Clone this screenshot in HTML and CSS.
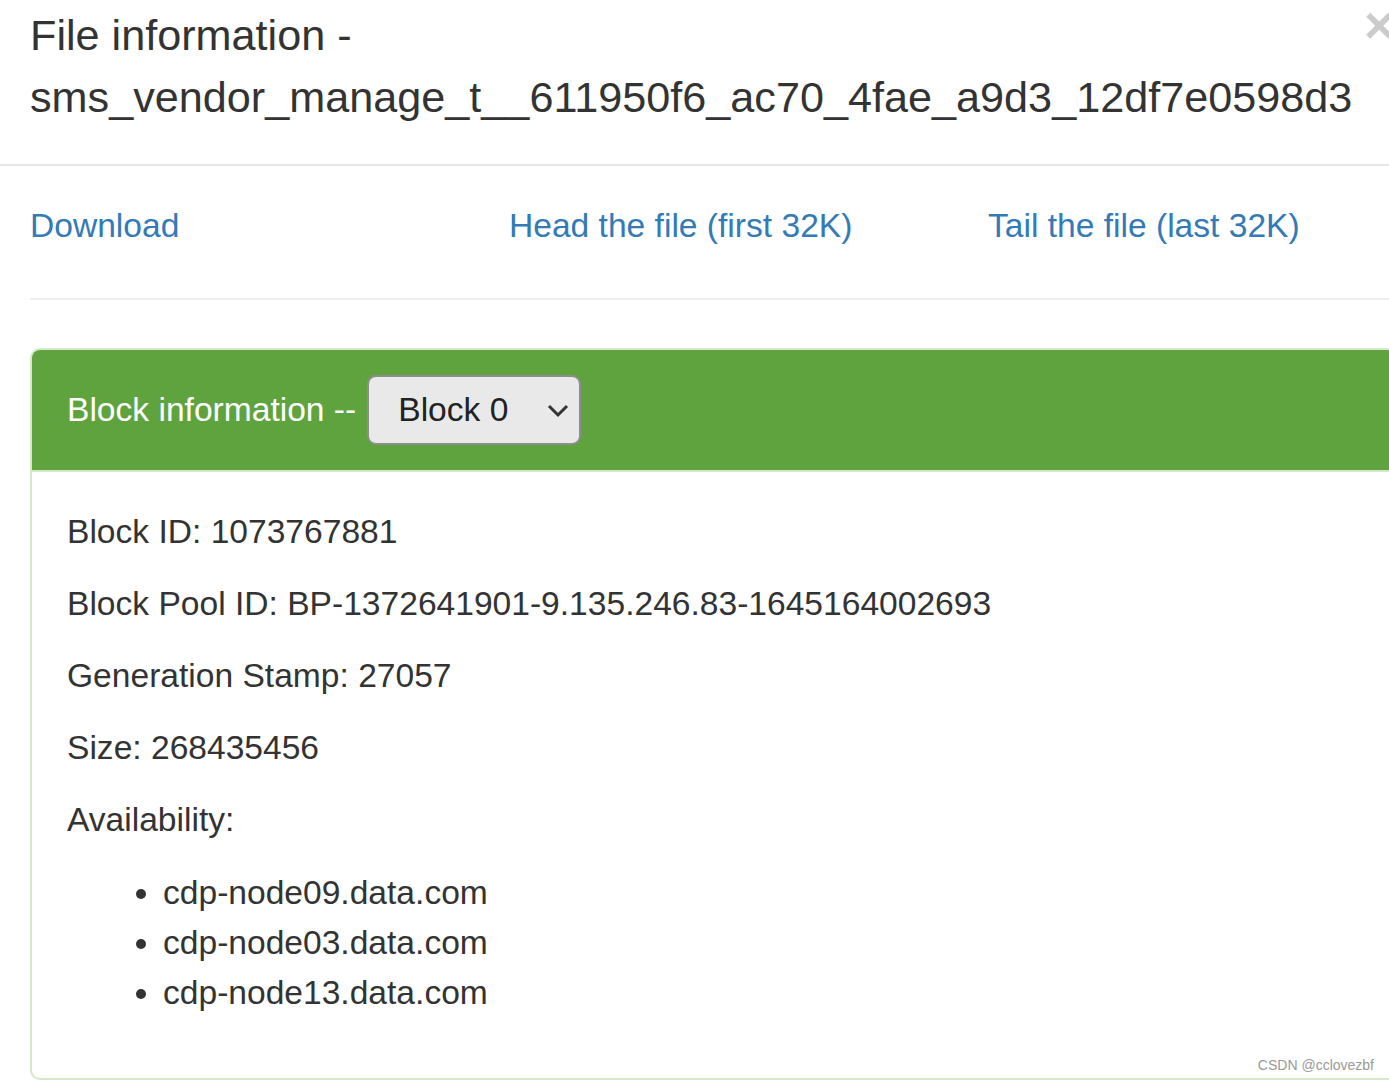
FILE: index.html
```html
<!DOCTYPE html>
<html>
<head>
<meta charset="utf-8">
<link rel="stylesheet" href="styles.css">
</head>
<body>
<div class="modal">
  <div class="modal-header">
    <span class="close">&times;</span>
    <h4 class="modal-title">File information - sms_vendor_manage_t__611950f6_ac70_4fae_a9d3_12df7e0598d3</h4>
  </div>
  <div class="modal-body">
    <div class="row">
      <div class="col"><a href="#">Download</a></div>
      <div class="col"><a href="#">Head the file (first 32K)</a></div>
      <div class="col"><a href="#">Tail the file (last 32K)</a></div>
    </div>
    <hr>
    <div class="panel">
      <div class="panel-heading">
        <span>Block information --</span>
        <span class="select">
          <span class="select-text">Block 0</span>
          <svg class="chev" width="22" height="14" viewBox="0 0 22 14"><path d="M2 2 L11 11 L20 2" fill="none" stroke="#333" stroke-width="3"/></svg>
        </span>
      </div>
      <div class="panel-body">
        <p>Block ID: 1073767881</p>
        <p>Block Pool ID: BP-1372641901-9.135.246.83-1645164002693</p>
        <p>Generation Stamp: 27057</p>
        <p>Size: 268435456</p>
        <p>Availability:</p>
        <ul>
          <li>cdp-node09.data.com</li>
          <li>cdp-node03.data.com</li>
          <li>cdp-node13.data.com</li>
        </ul>
      </div>
    </div>
  </div>
</div>
<div class="watermark">CSDN @cclovezbf</div>
</body>
</html>
```

FILE: styles.css
```css
html, body {
  margin: 0;
  padding: 0;
  overflow: hidden;
  background: #fff;
}
body {
  width: 1389px;
  height: 1080px;
  position: relative;
  font-family: "Liberation Sans", Arial, Helvetica, sans-serif;
  color: #333;
  font-size: 33.6px;
  line-height: 48px;
}
.modal {
  width: 1440px;
  margin-left: -7px;
}
.modal-header {
  position: relative;
  padding: 5px 36px 36px 37px;
  border-bottom: 2.4px solid #e5e5e5;
}
.modal-title {
  margin: 0;
  font-size: 43.2px;
  font-weight: normal;
  line-height: 61.7px;
  padding-right: 60px;
}
.close {
  position: absolute;
  left: 1371px;
  top: 0px;
  font-size: 52px;
  font-weight: bold;
  line-height: 50px;
  color: #000;
  opacity: 0.2;
  text-shadow: 0 2px 0 #fff;
}
.modal-body {
  padding: 36px 36px 36px 37px;
}
.row {
  display: flex;
  margin: 0 -36px;
}
.col {
  width: 479px;
  padding: 0 36px;
  box-sizing: border-box;
}
a {
  color: #337ab7;
  text-decoration: none;
}
hr {
  margin: 48px 0;
  border: 0;
  border-top: 2.4px solid #eee;
  height: 0;
}
.panel {
  border: 2.4px solid #d6e9c6;
  border-radius: 10px;
}
.panel-heading {
  background: #5fa33e;
  color: #fff;
  padding: 25px 36px 25px 35px;
  border-bottom: 2.4px solid #d6e9c6;
  border-radius: 8px 8px 0 0;
  display: flex;
  align-items: center;
  height: 70px;
}
.select {
  position: relative;
  display: inline-flex;
  align-items: center;
  margin-left: 11px;
  width: 214px;
  height: 70px;
  box-sizing: border-box;
  border: 2.5px solid #8d8d8d;
  border-radius: 9px;
  background: #e9e9e9;
  color: #222;
  padding-left: 29px;
}
.select-text {
  line-height: 48px;
}
.chev {
  position: absolute;
  left: 178px;
  top: 27px;
}
.panel-body {
  padding: 36px 36px 36px 35px;
}
p {
  margin: 0 0 24px 0;
}
ul {
  margin: 0 0 24px 0;
  padding-left: 96px;
}
li {
  line-height: 50px;
}
li:first-child {
  margin-top: 2px;
}
.watermark {
  position: absolute;
  right: 15px;
  bottom: 7px;
  font-size: 14px;
  line-height: 16px;
  color: #999;
}
```
